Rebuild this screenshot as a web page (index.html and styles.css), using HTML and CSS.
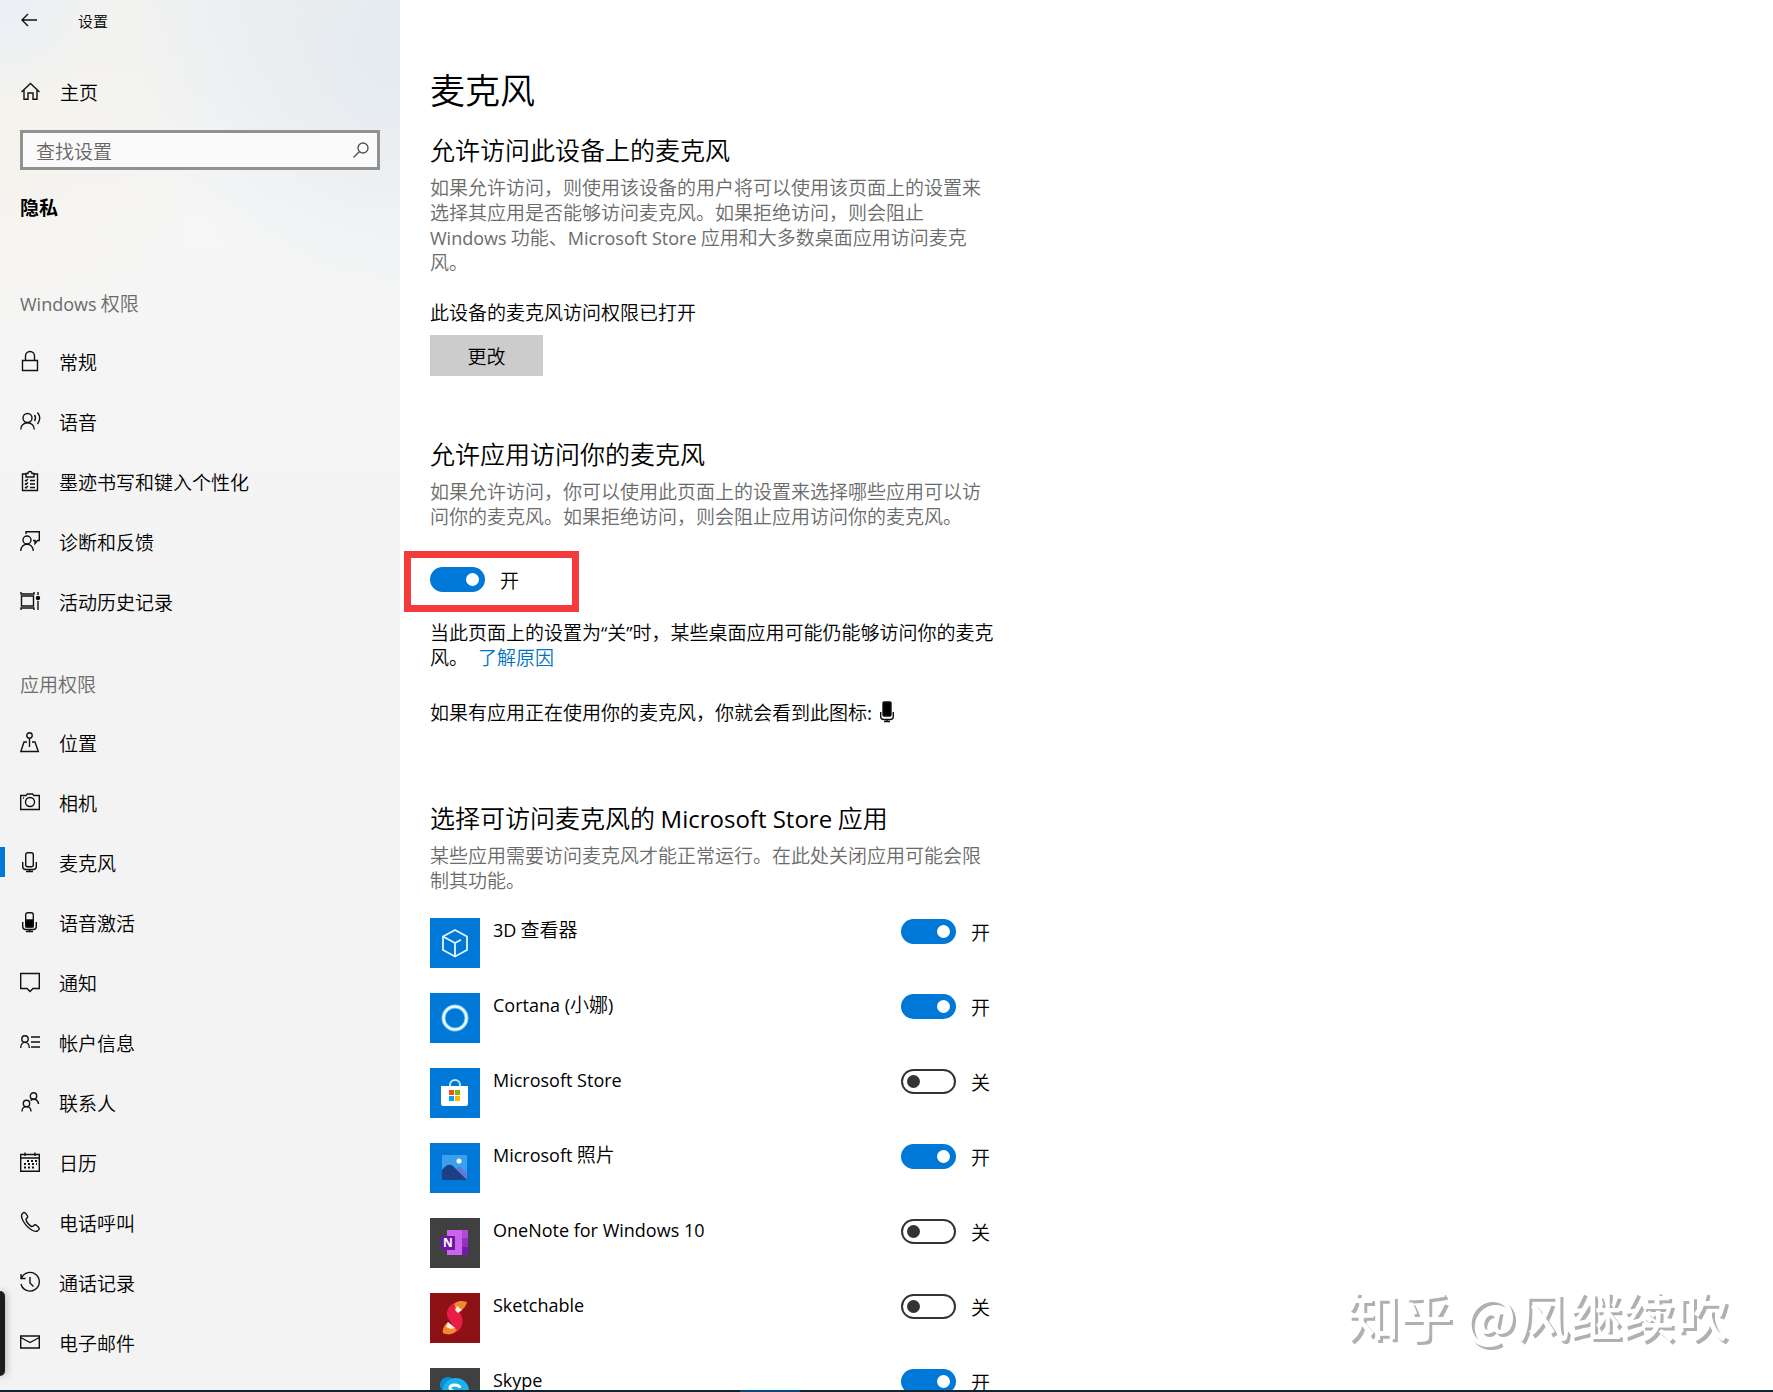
FILE: index.html
```
<!DOCTYPE html>
<html lang="zh-CN">
<head>
    <meta charset="UTF-8">
    <meta name="viewport" content="width=device-width, initial-scale=1.0">
    <title>设置</title>
    <link rel="stylesheet" href="styles.css">
</head>
<body>
    <div class="window">
        <aside class="sidebar">
            <header class="titlebar">
                <button class="back" aria-label="返回">
                    <svg class="icon" viewBox="0 0 20 20"><path d="M17 10H2M8 4l-6 6 6 6"/></svg>
                </button>
                <span>设置</span>
            </header>

            <a class="home" href="#home">
                <svg class="icon" viewBox="0 0 20 20"><path d="M1.500 11L10.500 2.500l9 8.500M4 9v9.300h4v-6.300h5v6.300h4V9"/></svg>
                <span>主页</span>
            </a>

            <div class="search">
                <input type="text" placeholder="查找设置" aria-label="查找设置">
                <svg class="icon search-icon" viewBox="0 0 20 20"><circle cx="12" cy="8" r="5"/><path d="M8.500 11.500L2.500 17.500"/></svg>
            </div>

            <h2 class="category">隐私</h2>

            <nav>
                <h3 class="group-title"><span class="latin">Windows</span> 权限</h3>
                <ul class="nav-links">
                    <li><a href="#general"><svg class="icon" viewBox="0 0 20 20"><path d="M2.500 9.500h15v10h-15zM5.500 9.500V5a4.500 4.500 0 0 1 9 0v4.500"/></svg>常规</a></li>
                    <li><a href="#speech"><svg class="icon" viewBox="0 0 20 20"><circle cx="7.500" cy="7" r="4.500"/><path d="M.7 18.500c0-9 13.600-9 13.600 0M14.500 4q2 3 0 6M17.500 1.500q4.500 5.500 0 11.500"/></svg>语音</a></li>
                    <li><a href="#inking"><svg class="icon" viewBox="0 0 20 20"><path d="M6 3H2.500v16.500h15V3H14M6 2.500h2a2 2 0 0 1 4 0h2V6H6zM5 9l1 1 2-2M5 12.500l1 1 2-2M5 16l1 1 2-2M10 9.500h5M10 13h5M10 16.500h5"/></svg>墨迹书写和键入个性化</a></li>
                    <li><a href="#diagnostics"><svg class="icon" viewBox="0 0 20 20"><circle cx="7" cy="9" r="4"/><path d="M.7 20c0-9 12.600-9 12.600 0M6 3V.7h13.300V9.500H17.500l-2.500 3v-3h-2"/></svg>诊断和反馈</a></li>
                    <li><a href="#activity"><svg class="icon" viewBox="0 0 20 20"><path d="M1.500 5h12v10h-12zM1 1v2h13V1M1 19v-2h13v2M18 1v3M18 10v9"/><circle class="solid" cx="18" cy="7" r="1.500"/></svg>活动历史记录</a></li>
                </ul>

                <h3 class="group-title">应用权限</h3>
                <ul class="nav-links">
                    <li><a href="#location"><svg class="icon" viewBox="0 0 20 20"><circle cx="9.500" cy="3.500" r="2.700"/><path d="M9.500 6.500V15M7 10H4L.8 19.500h17.500L15 10h-3"/></svg>位置</a></li>
                    <li><a href="#camera"><svg class="icon" viewBox="0 0 20 20"><path d="M.7 3.500H6L7.500 2h5L14 3.500h5.300v14H.7z"/><circle cx="10" cy="10" r="4.500"/><path d="M3 6h1"/></svg>相机</a></li>
                    <li><a class="active" href="#microphone"><svg class="icon" viewBox="0 0 20 20"><rect x="5.700" y=".7" width="7.600" height="14" rx="2"/><path d="M2.700 10v4.500q0 3 3 3h7.600q3 0 3-3V10M9.500 17.500v2M6 19.500h7"/></svg>麦克风</a></li>
                    <li><a href="#voice"><svg class="icon" viewBox="0 0 20 20"><rect x="5.700" y=".7" width="7.600" height="14" rx="2"/><path class="solid" d="M6 8h7v7H6z"/><path d="M2.700 10v4.500q0 3 3 3h7.600q3 0 3-3V10M9.500 17.500v2M6 19.500h7"/></svg>语音激活</a></li>
                    <li><a href="#notifications"><svg class="icon" viewBox="0 0 20 20"><path d="M.7 1.500h18.600v15H13l-3 3-3-3H.7z"/></svg>通知</a></li>
                    <li><a href="#account"><svg class="icon" viewBox="0 0 20 20"><circle cx="5" cy="7" r="3.200"/><path d="M.7 16c0-7.500 8.600-7.500 8.600 0M11 5h9M11 10h9M11 15h9"/></svg>帐户信息</a></li>
                    <li><a href="#contacts"><svg class="icon" viewBox="0 0 20 20"><circle cx="13.500" cy="4" r="3.200"/><circle cx="6.500" cy="11.500" r="3.200"/><path d="M2 19.500c0-6.500 9-6.500 9 0M10.500 8.500c3-2.500 8-1 8 3.500"/></svg>联系人</a></li>
                    <li><a href="#calendar"><svg class="icon" viewBox="0 0 20 20"><path d="M.7 2.500h18.600v16.800H.7zM.7 6h18.600M5 .5v3.500M15 .5v3.500"/><path class="dots" d="M4 12h13M4 15.500h10M7 9h10"/></svg>日历</a></li>
                    <li><a href="#phone"><svg class="icon" viewBox="0 0 20 20"><path d="M3 1c-6 4 8 21 14.500 18 3-2 2-3.500-1.500-6-2-1-2.500 1.500-4 1.500-2 0-6-5-6-7C6 6 8.500 6 7.500 4 6 1.500 4.500-.3 3 1z"/></svg>电话呼叫</a></li>
                    <li><a href="#history"><svg class="icon" viewBox="0 0 20 20"><path d="M1.500 6a9.300 9.300 0 1 1-.5 6M1 2v4.500h4.500M10 5v6l3.500 3.500"/></svg>通话记录</a></li>
                    <li><a href="#email"><svg class="icon" viewBox="0 0 20 20"><path d="M.7 4h18.600v12H.7zM.7 5.500L10 10.500l9.300-5"/></svg>电子邮件</a></li>
                </ul>
            </nav>
        </aside>

        <main class="content">
            <h1>麦克风</h1>

            <section>
                <h2>允许访问此设备上的麦克风</h2>
                <p class="desc">如果允许访问，则使用该设备的用户将可以使用该页面上的设置来选择其应用是否能够访问麦克风。如果拒绝访问，则会阻止 <span class="latin">Windows</span> 功能、<span class="latin">Microsoft Store</span> 应用和大多数桌面应用访问麦克风。</p>
                <p class="status">此设备的麦克风访问权限已打开</p>
                <button class="change">更改</button>
            </section>

            <section>
                <h2>允许应用访问你的麦克风</h2>
                <p class="desc">如果允许访问，你可以使用此页面上的设置来选择哪些应用可以访问你的麦克风。如果拒绝访问，则会阻止应用访问你的麦克风。</p>
                <div class="highlight">
                    <label class="toggle"><input type="checkbox" checked><span>开</span></label>
                </div>
                <p class="note">当此页面上的设置为<span class="latin">“</span>关<span class="latin">”</span>时，某些桌面应用可能仍能够访问你的麦克风。<a href="#why">了解原因</a></p>
                <p class="hint">如果有应用正在使用你的麦克风，你就会看到此图标:<svg class="icon" viewBox="0 0 20 20"><rect class="solid" x="6" y="0" width="8" height="14" rx="1"/><path d="M3.700 10v4.500q0 3 3 3h6.600q3 0 3-3V10M10 17.500v2M7 19.500h6"/></svg></p>
            </section>

            <section>
                <h2>选择可访问麦克风的 <span class="latin">Microsoft Store</span> 应用</h2>
                <p class="desc">某些应用需要访问麦克风才能正常运行。在此处关闭应用可能会限制其功能。</p>
                <ul class="apps">
                    <li>
                        <svg class="tile" viewBox="0 0 50 50"><g fill="none" stroke="#e4f6ff" stroke-width="1.800" stroke-linejoin="round"><path d="M25 12l12 6.500v13.500L25 38.500 13 32V18.500z"/><path d="M13 18.500L25 25l6-3.300M25 25v13.500"/></g></svg>
                        <span class="app-name" id="app-3d"><span class="latin">3D</span> 查看器</span>
                        <label class="toggle"><input type="checkbox" checked aria-describedby="app-3d"><span>开</span></label>
                    </li>
                    <li>
                        <svg class="tile" viewBox="0 0 50 50"><circle cx="25" cy="25" r="11.500" fill="none" stroke="#79cdfa" stroke-width="4"/><circle cx="25" cy="25" r="11.500" fill="none" stroke="#fff" stroke-width="2"/></svg>
                        <span class="app-name" id="app-cortana"><span class="latin">Cortana (</span>小娜<span class="latin">)</span></span>
                        <label class="toggle"><input type="checkbox" checked aria-describedby="app-cortana"><span>开</span></label>
                    </li>
                    <li>
                        <svg class="tile" viewBox="0 0 50 50"><path d="M20 18v-1a5 5 0 0 1 10 0v1" fill="none" stroke="#bfe5ff" stroke-width="2"/><path d="M11 18h27v18q0 2-2 2H13q-2 0-2-2z" fill="#fff"/><path d="M19 22h5v5h-5z" fill="#f25022"/><path d="M25 22h5v5h-5z" fill="#7fba00"/><path d="M19 28h5v5h-5z" fill="#00a4ef"/><path d="M25 28h5v5h-5z" fill="#ffb900"/></svg>
                        <span class="app-name" id="app-store"><span class="latin">Microsoft Store</span></span>
                        <label class="toggle"><input type="checkbox" aria-describedby="app-store"><span>关</span></label>
                    </li>
                    <li>
                        <svg class="tile" viewBox="0 0 50 50"><path d="M12 12h25v25H12z" fill="#3aa0ee"/><path d="M22 30l8-7 7 7v7H22z" fill="#5b7fd6"/><path d="M12 27q6-8 11-4l14 14H12z" fill="#1c3f86"/><circle cx="29" cy="18" r="2.500" fill="#fff"/></svg>
                        <span class="app-name" id="app-photos"><span class="latin">Microsoft</span> 照片</span>
                        <label class="toggle"><input type="checkbox" checked aria-describedby="app-photos"><span>开</span></label>
                    </li>
                    <li>
                        <svg class="tile dark" viewBox="0 0 50 50"><path d="M17 12h21v25H17z" fill="#ca64ea"/><path d="M32 12h6v8h-6z" fill="#ae4bd5"/><path d="M32 20h6v9h-6z" fill="#9332bf"/><path d="M32 29h6v8h-6z" fill="#7719aa"/><path d="M11 18h14v14H11z" fill="#6d16a3"/><text x="18" y="29" text-anchor="middle">N</text></svg>
                        <span class="app-name" id="app-onenote"><span class="latin">OneNote for Windows 10</span></span>
                        <label class="toggle"><input type="checkbox" aria-describedby="app-onenote"><span>关</span></label>
                    </li>
                    <li>
                        <svg class="tile red" viewBox="0 0 50 50"><path d="M32 8c-10 1-16 7-15 14 1 6 6 7 5 13l-4 5c6 1 12-1 14-8 2-6-1-10-3-14-1-4 0-7 3-10z" fill="#e81c44"/><path d="M37 9c-6-2-10-1-13 2l3 8c5-1 9-5 10-10z" fill="#f08a2c"/><path d="M25 17l2-4 5 4-4 3z" fill="#fff0e4"/><path d="M18 29c-4 3-6 8-5 11 6 3 11 1 14-3z" fill="#f08a2c"/><path d="M18 29l7 6-4 1-5-2z" fill="#fff0e4"/></svg>
                        <span class="app-name" id="app-sketchable"><span class="latin">Sketchable</span></span>
                        <label class="toggle"><input type="checkbox" aria-describedby="app-sketchable"><span>关</span></label>
                    </li>
                    <li>
                        <svg class="tile dark" viewBox="0 0 50 50"><circle cx="18" cy="17" r="8" fill="#0b8fdc"/><circle cx="26" cy="23" r="13" fill="#1ab2ec"/><path d="M30 20c-1-4-10-4-10 0 0 5 10 3 10 8 0 4-9 4-10 0" fill="none" stroke="#fff" stroke-width="3"/></svg>
                        <span class="app-name" id="app-skype"><span class="latin">Skype</span></span>
                        <label class="toggle"><input type="checkbox" checked aria-describedby="app-skype"><span>开</span></label>
                    </li>
                </ul>
            </section>
        </main>
    </div>

    <div class="edge-handle"></div>
    <div class="watermark">知乎 @风继续吹</div>
    <footer class="taskbar"><span class="taskbar-active"></span></footer>
</body>
</html>
```
FILE: styles.css
```
/* Reset and Base Styles */
* {
    margin: 0;
    padding: 0;
    box-sizing: border-box;
}

body {
    font-family: 'Noto Sans CJK SC', sans-serif;
    font-size: 19px;
    font-weight: 350;
    line-height: 25px;
    color: #000;
    background: #fff;
}

ul {
    list-style: none;
}

a {
    color: inherit;
    text-decoration: none;
}

button,
input {
    font: inherit;
    color: inherit;
}

.latin {
    font-family: 'Open Sans', sans-serif;
    font-size: 18px;
    font-weight: 400;
    line-height: 1;
}

.icon {
    width: 20px;
    height: 20px;
    flex: none;
    fill: none;
    stroke: #111;
    stroke-width: 1.4;
    overflow: visible;
}

.icon .solid {
    fill: #000;
}

.icon .dots {
    stroke-dasharray: 2 2;
    stroke-width: 2;
}

.window {
    display: flex;
    height: 100vh;
    overflow: hidden;
}

/* Sidebar */
.sidebar {
    flex: 0 0 400px;
    background:
        radial-gradient(circle at 400px 50px, #e4eaef, transparent 260px),
        radial-gradient(circle at 0 0, #eaeff6, transparent 110px),
        radial-gradient(circle at 0 120px, #f5f3ec, transparent 220px),
        linear-gradient(#f0f1f1, #f6f6f6 220px, #f3f3f3 640px);
}

.titlebar {
    display: flex;
    align-items: center;
    gap: 38px;
    height: 40px;
    padding: 0 20px;
    font-size: 15px;
}

.back {
    display: flex;
    border: none;
    background: none;
}

.home {
    display: flex;
    align-items: center;
    gap: 20px;
    height: 60px;
    margin-top: 21px;
    padding: 0 20px;
}

.search {
    display: flex;
    align-items: center;
    height: 40px;
    margin: 9px 20px 0;
    padding: 0 6px 0 13px;
    border: 3px solid #919191;
    background: #fafafa;
}

.search input {
    flex: 1;
    min-width: 0;
    border: none;
    outline: none;
    background: none;
}

.search input::placeholder {
    color: #666;
    opacity: 1;
}

.search-icon {
    stroke: #555;
}

.category {
    margin: 24px 20px 71px;
    font-size: 19px;
    font-weight: bold;
}

.group-title {
    height: 25px;
    margin: 0 20px 16px;
    color: #6b6b6b;
    font-size: 19px;
    font-weight: inherit;
}

.nav-links {
    margin-bottom: 40px;
}

.nav-links a {
    display: flex;
    align-items: center;
    gap: 19px;
    height: 60px;
    padding-left: 20px;
}

.nav-links a.active {
    background: linear-gradient(#0078d7, #0078d7) 0 50% / 5px 30px no-repeat;
}

/* Content */
.content {
    flex: 1;
    padding: 64px 30px 0;
}

.content h1 {
    height: 50px;
    font-size: 35px;
    font-weight: inherit;
    line-height: 50px;
}

.content section {
    max-width: 570px;
    margin-bottom: 60px;
}

.content h1 + section {
    padding-top: 18px;
}

.content h2 {
    height: 34px;
    font-size: 25px;
    font-weight: inherit;
    line-height: 34px;
}

.content h2 .latin {
    font-size: 24px;
}

.desc {
    max-width: 560px;
    padding-top: 8px;
    color: #6b6b6b;
}

.status {
    margin: 25px 0 11px;
}

.change {
    display: block;
    width: 113px;
    height: 41px;
    border: none;
    background: #ccc;
}

.toggle {
    display: flex;
    align-items: center;
    gap: 15px;
    height: 25px;
}

.toggle input {
    display: flex;
    align-items: center;
    width: 55px;
    height: 25px;
    padding: 0 4px;
    border: 2px solid #333;
    border-radius: 13px;
    appearance: none;
}

.toggle input::before {
    content: '';
    width: 13px;
    height: 13px;
    border-radius: 50%;
    background: #333;
}

.toggle input:checked {
    justify-content: flex-end;
    border-color: #0078d7;
    background: #0078d7;
}

.toggle input:checked::before {
    background: #fff;
}

.highlight {
    width: 175px;
    height: 61px;
    margin: 23px 0 7px -26px;
    padding: 9px 19px;
    border: 7px solid #f43b3b;
}

.note a {
    margin-left: 10px;
    color: #0073c2;
}

.hint {
    display: flex;
    align-items: center;
    margin: 30px 0 76px;
}

.hint .icon {
    margin-left: 5px;
}

/* App list */
.apps {
    margin-top: 26px;
}

.apps li {
    display: flex;
    align-items: flex-start;
    height: 75px;
}

.tile {
    width: 50px;
    height: 50px;
    margin-right: 13px;
    background: #0078d7;
}

.tile.dark {
    background: #404040;
}

.tile.red {
    background: #8e1116;
}

.tile text {
    fill: #fff;
    font: bold 12px 'Open Sans', sans-serif;
}

.app-name {
    flex: 1;
    line-height: 22px;
}

.apps .toggle {
    width: 99px;
    margin-top: 1px;
}

/* Overlays on the window edges */
.edge-handle {
    position: fixed;
    left: 0;
    bottom: 16px;
    width: 5px;
    height: 85px;
    border-radius: 0 6px 6px 0;
    background: #1c1c20;
    box-shadow: 0 0 8px rgba(0, 0, 0, 0.4);
}

.watermark {
    position: fixed;
    right: 45px;
    bottom: 42px;
    color: #fff;
    font-size: 53px;
    font-weight: 500;
    line-height: 72px;
    text-shadow: 3px 3px 0 #b0b0b0;
}

.taskbar {
    position: fixed;
    left: 0;
    right: 0;
    bottom: 0;
    height: 2px;
    padding-left: 740px;
    background: #0c2434;
}

.taskbar-active {
    display: block;
    width: 60px;
    height: 2px;
    background: #0a4a80;
}
```
